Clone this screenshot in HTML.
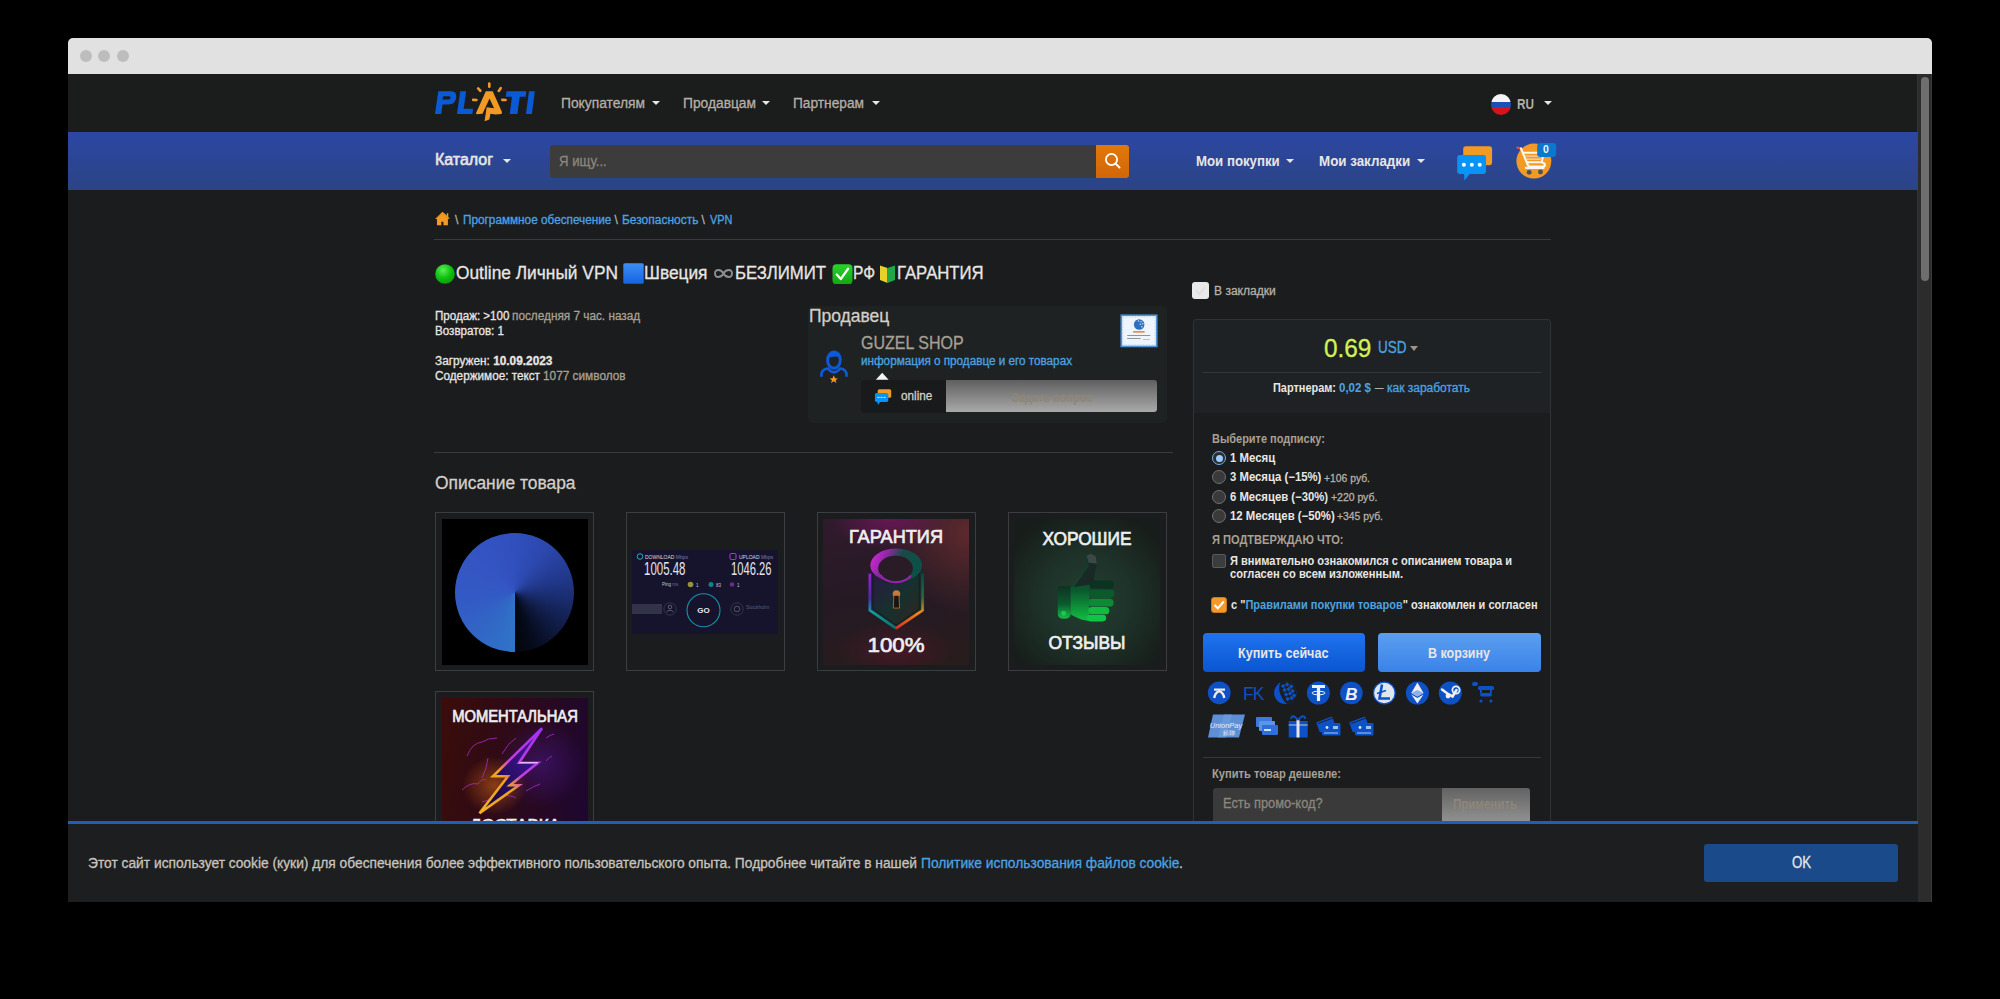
<!DOCTYPE html>
<html><head><meta charset="utf-8"><style>
html,body{margin:0;padding:0;background:#000;}
body{width:2000px;height:999px;overflow:hidden;position:relative;font-family:"Liberation Sans", sans-serif;}
.a{position:absolute;}
.t{position:absolute;white-space:nowrap;transform-origin:0 0;-webkit-text-stroke:0.3px currentColor;}
</style></head><body>
<div class="a" style="left:68px;top:38px;width:1864px;height:864px;background:#1b1c1d;border-radius:5px 5px 0 0;overflow:hidden"></div>
<div class="a" style="left:68px;top:38px;width:1864px;height:36px;background:#e1e1e1;border-radius:5px 5px 0 0"></div>
<div class="a" style="left:79.5px;top:50px;width:12px;height:12px;background:#bdbdbd;border-radius:50%"></div>
<div class="a" style="left:97.5px;top:50px;width:12px;height:12px;background:#bdbdbd;border-radius:50%"></div>
<div class="a" style="left:117px;top:50px;width:12px;height:12px;background:#bdbdbd;border-radius:50%"></div>
<div class="a" style="left:68px;top:74px;width:1850px;height:58px;background:#1b1c1c"></div>
<div class="a" style="left:1917px;top:74px;width:15px;height:828px;background:#2c2c2c;border-left:1px solid #333;border-right:1px solid #3a3a3a;box-sizing:border-box"></div>
<div class="a" style="left:1921px;top:77px;width:8px;height:204px;background:#6e6e6e;border-radius:4px"></div>
<div class="a" style="left:68px;top:132px;width:1850px;height:58px;background:linear-gradient(#2c47a4,#2b4484)"></div>
<svg class="a" style="left:430px;top:78px;" width="110" height="48" viewBox="0 0 2000 873"><path fill="#0a5ad6" fill-rule="evenodd" d="M90 655 L150 240 L385 240 Q485 242 478 350 Q468 478 330 482 L228 482 L203 655 Z M242 330 L222 392 L340 392 Q372 390 374 360 Q376 330 345 330 Z"/><path fill="#0a5ad6" d="M490 655 L550 240 L657 240 L612 560 L782 560 L770 655 Z"/><path fill="#0a5ad6" d="M1392 240 L1752 240 L1738 340 L1630 340 L1590 655 L1450 655 L1490 340 L1378 340 Z"/><path fill="#0a5ad6" d="M1800 240 L1907 240 L1852 655 L1745 655 Z"/><path fill="#f39a24" d="M835 640 L1015 240 L1085 240 L1085 368 L955 652 L850 660 Z M1080 368 L1080 240 L1140 240 L1310 622 L1300 655 L1190 662 L1100 648 L1078 755 L992 785 L1030 530 L1165 548 Z"/><g stroke="#f39a24" stroke-width="48" stroke-linecap="round"><line x1="1078" y1="100" x2="1078" y2="160"/><line x1="875" y1="190" x2="915" y2="232"/><line x1="1285" y1="185" x2="1250" y2="235"/><line x1="785" y1="397" x2="845" y2="400"/><line x1="1315" y1="397" x2="1375" y2="400"/></g></svg>
<div class="t" id="t0" style="left:561px;top:96.15px;font-size:14px;line-height:14px;color:#b5afa6;transform:scaleX(0.9864);">Покупателям</div>
<div class="a" style="left:652px;top:101px;width:0;height:0;border-left:4.0px solid transparent;border-right:4.0px solid transparent;border-top:4.5px solid #e8e6e3"></div>
<div class="t" id="t1" style="left:682.5px;top:96.15px;font-size:14px;line-height:14px;color:#b5afa6;transform:scaleX(0.9844);">Продавцам</div>
<div class="a" style="left:762px;top:101px;width:0;height:0;border-left:4.0px solid transparent;border-right:4.0px solid transparent;border-top:4.5px solid #e8e6e3"></div>
<div class="t" id="t2" style="left:793px;top:96.15px;font-size:14px;line-height:14px;color:#b5afa6;transform:scaleX(0.9797);">Партнерам</div>
<div class="a" style="left:872px;top:101px;width:0;height:0;border-left:4.0px solid transparent;border-right:4.0px solid transparent;border-top:4.5px solid #e8e6e3"></div>
<div class="a" style="left:1490.5px;top:93.5px;width:20px;height:21px;border-radius:50%;overflow:hidden;background:linear-gradient(#f4f4f4 0,#f4f4f4 36%,#1a4fb5 36%,#1a4fb5 64%,#d3141d 64%)"></div>
<div class="t" id="t3" style="left:1517px;top:96.90px;font-size:14px;line-height:14px;color:#b5afa6;font-weight:700;-webkit-text-stroke:0;transform:scaleX(0.8402);">RU</div>
<div class="a" style="left:1543.5px;top:101px;width:0;height:0;border-left:4.0px solid transparent;border-right:4.0px solid transparent;border-top:4.5px solid #e8e6e3"></div>
<div class="t" id="t4" style="left:434.5px;top:152.26px;font-size:16px;line-height:16px;color:#e8e6e3;transform:scaleX(0.9970);-webkit-text-stroke:0.6px currentColor;">Каталог</div>
<div class="a" style="left:503px;top:159px;width:0;height:0;border-left:4.0px solid transparent;border-right:4.0px solid transparent;border-top:4.5px solid #e8e6e3"></div>
<div class="a" style="left:549.5px;top:144.5px;width:547px;height:33px;background:#3c3c3c;border-radius:3px 0 0 3px"></div>
<div class="t" id="t5" style="left:559.25px;top:154.40px;font-size:14px;line-height:14px;color:#8d867c;transform:scaleX(0.9406);">Я ищу...</div>
<div class="a" style="left:1096px;top:144.5px;width:33px;height:33px;background:linear-gradient(#e0790a,#d3650a);border-radius:0 3px 3px 0"></div>
<svg class="a" style="left:1103px;top:151px" width="20" height="20" viewBox="0 0 20 20"><circle cx="8.5" cy="8.5" r="5.6" fill="none" stroke="#fff" stroke-width="1.8"/><line x1="12.6" y1="12.6" x2="16.5" y2="16.5" stroke="#fff" stroke-width="2" stroke-linecap="round"/></svg>
<div class="t" id="t6" style="left:1196.25px;top:154.15px;font-size:14px;line-height:14px;color:#e8e6e3;font-weight:700;-webkit-text-stroke:0;transform:scaleX(0.9453);">Мои покупки</div>
<div class="a" style="left:1286px;top:159px;width:0;height:0;border-left:4.0px solid transparent;border-right:4.0px solid transparent;border-top:4.5px solid #e8e6e3"></div>
<div class="t" id="t7" style="left:1318.75px;top:154.15px;font-size:14px;line-height:14px;color:#e8e6e3;font-weight:700;-webkit-text-stroke:0;transform:scaleX(0.9541);">Мои закладки</div>
<div class="a" style="left:1417px;top:159px;width:0;height:0;border-left:4.0px solid transparent;border-right:4.0px solid transparent;border-top:4.5px solid #e8e6e3"></div>
<svg class="a" style="left:1450px;top:138px;" width="110" height="48" viewBox="0 0 2000 873"><rect x="240" y="150" width="525" height="345" rx="45" fill="#f39a24"/><rect x="130" y="310" width="525" height="345" rx="45" fill="#0794f5"/><path d="M255 640 L370 640 L262 772 Z" fill="#0794f5"/><g fill="#fff"><circle cx="252" cy="487" r="36"/><circle cx="397" cy="487" r="36"/><circle cx="540" cy="487" r="36"/></g><circle cx="1525" cy="420" r="318" fill="#f39a24"/><line x1="1225" y1="175" x2="1290" y2="195" stroke="#e74c3c" stroke-width="40" stroke-linecap="round"/><path d="M1290 190 L1420 500 Q1430 520 1460 520 L1690 520 Q1725 520 1725 490 Q1725 455 1690 455" fill="none" stroke="#fbf6ee" stroke-width="40" stroke-linecap="round"/><path d="M1330 268 L1700 268 L1670 440 L1400 440" fill="none" stroke="#fbf6ee" stroke-width="38"/><line x1="1380" y1="545" x2="1700" y2="545" stroke="#fbf6ee" stroke-width="40" stroke-linecap="round"/><line x1="1370" y1="330" x2="1680" y2="330" stroke="#f7c890" stroke-width="30"/><line x1="1390" y1="385" x2="1670" y2="385" stroke="#f7c890" stroke-width="30"/><circle cx="1440" cy="625" r="45" fill="#4a5060"/><circle cx="1645" cy="620" r="45" fill="#4a5060"/><rect x="1585" y="90" width="345" height="255" rx="60" fill="#0a78d0"/><text x="1745" y="280" font-family="Liberation Sans" font-size="190" font-weight="700" fill="#f2f2f2" text-anchor="middle">0</text></svg>
<svg class="a" style="left:430px;top:206px;" width="40" height="24" viewBox="0 0 1665 999"><path fill="#f39a24" d="M520 240 L215 540 L290 540 L290 800 L470 800 L470 660 L560 660 L560 800 L745 800 L745 540 L825 520 L760 455 L760 300 L700 300 L700 400 Z"/><path d="M240 520 L520 330 L800 520" fill="none" stroke="#b97018" stroke-width="22" opacity="0.6"/></svg>
<div class="t" id="t8" style="left:455px;top:213.64px;font-size:12px;line-height:12px;color:#b5afa6;">\</div>
<div class="t" id="t9" style="left:463px;top:213.64px;font-size:12px;line-height:12px;color:#4ba3e3;transform:scaleX(0.9809);">Программное обеспечение</div>
<div class="t" id="t10" style="left:614.5px;top:213.64px;font-size:12px;line-height:12px;color:#b5afa6;">\</div>
<div class="t" id="t11" style="left:622px;top:213.64px;font-size:12px;line-height:12px;color:#4ba3e3;transform:scaleX(0.9981);">Безопасность</div>
<div class="t" id="t12" style="left:701.5px;top:213.64px;font-size:12px;line-height:12px;color:#b5afa6;">\</div>
<div class="t" id="t13" style="left:710px;top:213.64px;font-size:12px;line-height:12px;color:#4ba3e3;transform:scaleX(0.9073);">VPN</div>
<div class="a" style="left:434px;top:239px;width:1117px;height:1px;background:#393c3e"></div>
<div class="t" id="t14" style="left:455.5px;top:264.14px;font-size:18.5px;line-height:18.5px;color:#e8e6e3;transform:scaleX(0.9369);">Outline Личный VPN</div>
<div class="t" id="t15" style="left:644px;top:264.14px;font-size:18.5px;line-height:18.5px;color:#e8e6e3;transform:scaleX(0.9364);">Швеция</div>
<div class="t" id="t16" style="left:735px;top:264.14px;font-size:18.5px;line-height:18.5px;color:#e8e6e3;transform:scaleX(0.9055);">БЕЗЛИМИТ</div>
<div class="t" id="t17" style="left:853px;top:264.14px;font-size:18.5px;line-height:18.5px;color:#e8e6e3;transform:scaleX(0.8396);">РФ</div>
<div class="t" id="t18" style="left:896.5px;top:264.14px;font-size:18.5px;line-height:18.5px;color:#e8e6e3;transform:scaleX(0.9042);">ГАРАНТИЯ</div>
<svg class="a" style="left:435px;top:263.5px;" width="20" height="20" viewBox="0 0 20 20"><defs><radialGradient id="gc" cx="0.4" cy="0.3" r="0.75"><stop offset="0" stop-color="#5af05a"/><stop offset="0.55" stop-color="#10c010"/><stop offset="1" stop-color="#0a9a0a"/></radialGradient></defs><circle cx="10" cy="10" r="9.8" fill="url(#gc)"/></svg><svg class="a" style="left:623px;top:263px;" width="21" height="21" viewBox="0 0 21 21"><defs><linearGradient id="bs" x1="0" y1="0" x2="0" y2="1"><stop offset="0" stop-color="#3d8ef5"/><stop offset="1" stop-color="#1463e0"/></linearGradient></defs><rect x="0.3" y="0.3" width="20.4" height="20.4" rx="1.5" fill="url(#bs)"/></svg><svg class="a" style="left:713px;top:267px;" width="21" height="13" viewBox="0 0 21 13"><path d="M10.5 6.5 C8 2 2 1.5 2 6.5 C2 11.5 8 11 10.5 6.5 C13 2 19 1.5 19 6.5 C19 11.5 13 11 10.5 6.5 Z" fill="none" stroke="#8e8e8e" stroke-width="1.9"/></svg><svg class="a" style="left:831.5px;top:263.5px;" width="21" height="20.5" viewBox="0 0 21 20.5"><defs><linearGradient id="gk" x1="0" y1="0" x2="0" y2="1"><stop offset="0" stop-color="#2ed12e"/><stop offset="1" stop-color="#10a810"/></linearGradient></defs><rect x="0.5" y="0.3" width="20" height="20" rx="4" fill="url(#gk)"/><path d="M4.8 10.5 L8.8 15 L16 4.8" fill="none" stroke="#fff" stroke-width="2.3" stroke-linecap="round" stroke-linejoin="round"/></svg><svg class="a" style="left:878.5px;top:263.5px;" width="17" height="19.5" viewBox="0 0 17 19.5"><path d="M1 1.5 L8.5 4 L8.5 19 L1 16 Z" fill="#e8cf2a"/><path d="M16 1.5 L8.5 4 L8.5 19 L16 16 Z" fill="#1fa845"/></svg>
<div class="t" id="t19" style="left:434.6px;top:309.84px;font-size:12px;line-height:12px;color:#e8e6e3;transform:scaleX(0.9649);">Продаж: >100</div>
<div class="t" id="t20" style="left:512.4px;top:309.84px;font-size:12px;line-height:12px;color:#a8a095;transform:scaleX(0.9824);">последняя 7 час. назад</div>
<div class="t" id="t21" style="left:434.6px;top:325.44px;font-size:12px;line-height:12px;color:#e8e6e3;transform:scaleX(0.9682);">Возвратов: 1</div>
<div class="t" id="t22" style="left:434.6px;top:355.44px;font-size:12px;line-height:12px;color:#e8e6e3;transform:scaleX(0.9863);">Загружен: <b>10.09.2023</b></div>
<div class="t" id="t23" style="left:434.6px;top:369.84px;font-size:12px;line-height:12px;color:#e8e6e3;transform:scaleX(0.9782);">Содержимое: текст</div>
<div class="t" id="t24" style="left:543.4px;top:369.84px;font-size:12px;line-height:12px;color:#a8a095;transform:scaleX(0.9853);">1077 символов</div>
<div class="a" style="left:808px;top:306px;width:358.5px;height:116.5px;background:#1f2223;border-radius:5px"></div>
<div class="t" id="t25" style="left:809px;top:306.84px;font-size:18.5px;line-height:18.5px;color:#d3cfc9;transform:scaleX(0.9440);">Продавец</div>
<div class="t" id="t26" style="left:860.8px;top:334.89px;font-size:17.5px;line-height:17.5px;color:#a8a095;transform:scaleX(0.9148);">GUZEL SHOP</div>
<div class="t" id="t27" style="left:860.8px;top:354.84px;font-size:12px;line-height:12px;color:#4ba3e3;transform:scaleX(0.9750);">информация о продавце и его товарах</div>
<div class="a" style="left:860.5px;top:379.5px;width:85px;height:33.5px;background:#181a1b;border-radius:4px 0 0 4px"></div>
<div class="t" id="t28" style="left:900.7px;top:389.84px;font-size:12px;line-height:12px;color:#d3cfc9;transform:scaleX(0.9772);">online</div>
<div class="a" style="left:946px;top:380px;width:210.5px;height:32px;background:linear-gradient(#5f5f5f,#a9a9a9);border-radius:0 3px 3px 0"></div>
<div class="t" id="t29" style="left:1011.5px;top:391.64px;font-size:12px;line-height:12px;color:#8f8577;font-weight:700;-webkit-text-stroke:0;transform:scaleX(0.9143);">Задать вопрос</div>
<svg class="a" style="left:812px;top:340px;" width="88" height="75" viewBox="0 0 1172 999"><ellipse cx="292" cy="268" rx="85" ry="108" fill="none" stroke="#0d5ad8" stroke-width="38"/><path d="M205 240 Q220 150 300 150 Q385 150 385 240 Q330 200 205 240 Z" fill="#0d5ad8"/><path d="M125 490 L125 460 Q130 390 210 380 Q250 430 292 430 Q335 430 375 380 Q455 390 460 460 L460 490" fill="none" stroke="#0d5ad8" stroke-width="36"/><path fill="#f39a24" d="M290 470 L307 510 L345 512 L315 535 L327 572 L290 550 L253 572 L265 535 L235 512 L273 510 Z"/><path fill="#f4f4f4" d="M850 530 L1020 530 L935 435 Z"/><rect x="875" y="655" width="180" height="115" rx="22" fill="#f39a24"/><rect x="838" y="705" width="178" height="120" rx="22" fill="#0794f5"/><path d="M865 815 L915 815 L880 865 Z" fill="#0794f5"/><g stroke="#cfe8ff" stroke-width="14"><line x1="870" y1="765" x2="900" y2="765"/><line x1="912" y1="765" x2="940" y2="765"/><line x1="952" y1="765" x2="980" y2="765"/></g></svg>
<svg class="a" style="left:1115px;top:310px;" width="50" height="42" viewBox="0 0 1189 999"><rect x="150" y="125" width="842" height="742" fill="#eef5fc" stroke="#4d93d8" stroke-width="40"/><rect x="190" y="165" width="762" height="662" fill="none" stroke="#b7d3ef" stroke-width="22" stroke-dasharray="30 40"/><circle cx="575" cy="345" r="125" fill="#2a72c0"/><g fill="#cfe0f3"><circle cx="560" cy="260" r="18"/><circle cx="620" cy="280" r="18"/><circle cx="600" cy="340" r="18"/><circle cx="660" cy="330" r="18"/><circle cx="640" cy="400" r="18"/></g><rect x="430" y="500" width="275" height="40" fill="#e88a4a"/><rect x="290" y="595" width="550" height="22" fill="#8a8a8a"/><rect x="290" y="665" width="320" height="22" fill="#8a8a8a"/><rect x="665" y="690" width="160" height="14" fill="#9a9a9a"/></svg>
<div class="a" style="left:434px;top:452px;width:739px;height:1px;background:#393c3e"></div>
<div class="t" id="t30" style="left:434.9px;top:473.56px;font-size:18px;line-height:18px;color:#d3cfc9;transform:scaleX(0.9672);">Описание товара</div>
<div class="a" style="left:435px;top:511.5px;width:159px;height:159px;border:1px solid #3b3e40;box-sizing:border-box"></div>
<div class="a" style="left:625.5px;top:511.5px;width:159px;height:159px;border:1px solid #3b3e40;box-sizing:border-box"></div>
<div class="a" style="left:816.5px;top:511.5px;width:159px;height:159px;border:1px solid #3b3e40;box-sizing:border-box"></div>
<div class="a" style="left:1008px;top:511.5px;width:159px;height:159px;border:1px solid #3b3e40;box-sizing:border-box"></div>
<div class="a" style="left:435px;top:690.5px;width:159px;height:159px;border:1px solid #3b3e40;box-sizing:border-box"></div>
<div class="a" style="left:442px;top:519px;width:145.5px;height:146px;background:#000"></div><div class="a" style="left:455.2px;top:533.2px;width:118.6px;height:119px;border-radius:50%;background:conic-gradient(from 0deg,#3150bd 0deg,#2c48ae 35deg,#1f3584 80deg,#12204f 120deg,#070d22 155deg,#020509 179.5deg,#2f74c7 180deg,#3168c6 215deg,#335ac4 260deg,#3454c3 320deg,#3150bd 360deg)"></div>
<svg class="a" style="left:632px;top:549.5px;" width="146" height="84.5" viewBox="0 0 146 84.5"><rect width="146" height="84.5" fill="#15142c"/><circle cx="8" cy="6.5" r="2.8" fill="none" stroke="#1ab5b5" stroke-width="1"/><text x="13" y="8.5" font-family="Liberation Sans" font-size="5" fill="#d8d8e8">DOWNLOAD <tspan fill="#7a7aa0">Mbps</tspan></text><rect x="98" y="3.5" width="6" height="6" rx="1.2" fill="none" stroke="#b03ad0" stroke-width="1"/><text x="107" y="8.5" font-family="Liberation Sans" font-size="5" fill="#d8d8e8">UPLOAD <tspan fill="#7a7aa0">Mbps</tspan></text><text x="12" y="25" font-family="Liberation Sans" font-size="18" fill="#e4e4ee" textLength="41.5" lengthAdjust="spacingAndGlyphs">1005.48</text><text x="99" y="25" font-family="Liberation Sans" font-size="18" fill="#e4e4ee" textLength="40.5" lengthAdjust="spacingAndGlyphs">1046.26</text><text x="30" y="36" font-family="Liberation Sans" font-size="4.5" fill="#c8c8d8">Ping <tspan fill="#6a6a90">ms</tspan></text><circle cx="58.5" cy="34.5" r="2.8" fill="#9a9040"/><circle cx="79" cy="34.5" r="2.5" fill="#15808a"/><circle cx="100" cy="34.5" r="2.3" fill="#6a2a8a"/><text x="64" y="36.5" font-family="Liberation Sans" font-size="4.5" fill="#c8c8d8">1</text><text x="84" y="36.5" font-family="Liberation Sans" font-size="4.5" fill="#c8c8d8">83</text><text x="105" y="36.5" font-family="Liberation Sans" font-size="4.5" fill="#c8c8d8">1</text><rect x="0" y="54" width="30" height="10" fill="#4a4a60" opacity="0.55"/><circle cx="38" cy="59" r="6.2" fill="none" stroke="#3a3a55" stroke-width="0.8"/><circle cx="38" cy="57" r="1.8" fill="none" stroke="#8a8aa0" stroke-width="0.6"/><path d="M34.5 62 Q38 58.5 41.5 62" fill="none" stroke="#8a8aa0" stroke-width="0.6"/><circle cx="71.5" cy="60.2" r="16.5" fill="none" stroke="#1a8ea8" stroke-width="1.1"/><text x="71.5" y="63" font-family="Liberation Sans" font-size="8" font-weight="700" fill="#e8e8f0" text-anchor="middle">GO</text><circle cx="105" cy="59" r="6.2" fill="none" stroke="#3a3a55" stroke-width="0.8"/><circle cx="105" cy="59" r="2.8" fill="none" stroke="#7a7a95" stroke-width="0.6"/><text x="114" y="58.5" font-family="Liberation Sans" font-size="5" fill="#5a5a80">Stockholm</text></svg>
<div class="a" style="left:823px;top:519px;width:146px;height:146px;overflow:hidden;background:radial-gradient(ellipse 40% 22% at 45% 0%,rgba(150,20,120,0.55),rgba(0,0,0,0) 100%),radial-gradient(ellipse 55% 55% at 100% 10%,rgba(105,45,45,0.8),rgba(0,0,0,0) 100%),radial-gradient(ellipse 40% 20% at 50% 90%,rgba(110,20,45,0.4),rgba(0,0,0,0) 100%),linear-gradient(170deg,#301a2c 0%,#251a24 50%,#281c1c 100%)"></div><svg class="a" style="left:823px;top:519px;" width="146" height="146" viewBox="0 0 146 146"><text x="73" y="24" font-family="Liberation Sans" font-size="19" fill="#eeeeee" stroke="#eeeeee" stroke-width="0.7" text-anchor="middle" textLength="94" lengthAdjust="spacingAndGlyphs">ГАРАНТИЯ</text><text x="73" y="133" font-family="Liberation Sans" font-size="21" fill="#eeeeee" stroke="#eeeeee" stroke-width="0.7" text-anchor="middle" textLength="57" lengthAdjust="spacingAndGlyphs">100%</text></svg><svg class="a" style="left:855px;top:545px;" width="80" height="90" viewBox="0 0 888 999"><defs><linearGradient id="rimL" x1="0" y1="0" x2="0" y2="1"><stop offset="0" stop-color="#9a20d0"/><stop offset="0.45" stop-color="#4a2aa0"/><stop offset="0.7" stop-color="#10a0a0"/><stop offset="1" stop-color="#106a6a"/></linearGradient><linearGradient id="rimR" x1="0" y1="0" x2="0" y2="1"><stop offset="0" stop-color="#0a4a40"/><stop offset="0.45" stop-color="#2a6a40"/><stop offset="0.72" stop-color="#f08a18"/><stop offset="1" stop-color="#e02a20"/></linearGradient><linearGradient id="body" x1="0" y1="0" x2="1" y2="1"><stop offset="0" stop-color="#2e1646"/><stop offset="0.5" stop-color="#17302e"/><stop offset="1" stop-color="#33241e"/></linearGradient><linearGradient id="shk" x1="0" y1="0" x2="1" y2="0.3"><stop offset="0" stop-color="#f020f0"/><stop offset="0.35" stop-color="#8a2aa0"/><stop offset="0.6" stop-color="#1a4a48"/><stop offset="1" stop-color="#0c5048"/></linearGradient></defs><path d="M145 330 Q145 290 185 290 L730 290 Q770 290 770 330 L770 730 L455 950 L145 730 Z" fill="url(#body)"/><path d="M200 320 L715 320 L715 710 L455 890 L200 710 Z" fill="none" stroke="#0e1a1a" stroke-width="14" opacity="0.6"/><path d="M165 320 L165 725 L455 925" fill="none" stroke="url(#rimL)" stroke-width="30"/><path d="M750 320 L750 725 L455 925" fill="none" stroke="url(#rimR)" stroke-width="30"/><path fill-rule="evenodd" fill="url(#shk)" d="M170 225 A287 185 0 0 1 745 225 A287 185 0 0 1 170 225 Z M260 260 A190 140 0 0 0 640 260 A190 140 0 0 0 260 260 Z"/><ellipse cx="450" cy="260" rx="190" ry="140" fill="#2a1c26"/><path d="M280 330 A190 140 0 0 0 620 340" fill="none" stroke="#9a20b0" stroke-width="22"/><circle cx="460" cy="545" r="42" fill="#c87a38"/><path d="M432 560 L488 560 L495 700 L425 700 Z" fill="#1a1410" stroke="#b06a28" stroke-width="10"/></svg>
<div class="a" style="left:1014px;top:519px;width:146px;height:146px;background:radial-gradient(circle at 50% 55%,#243e32 0%,#1e3329 40%,#171d1a 85%)"></div><svg class="a" style="left:1014px;top:519px;" width="146" height="146" viewBox="0 0 146 146"><text x="73" y="26" font-family="Liberation Sans" font-size="19" fill="#eeeeee" stroke="#eeeeee" stroke-width="0.7" text-anchor="middle" textLength="89" lengthAdjust="spacingAndGlyphs">ХОРОШИЕ</text><text x="73" y="130" font-family="Liberation Sans" font-size="18" fill="#eeeeee" stroke="#eeeeee" stroke-width="0.7" text-anchor="middle" textLength="77" lengthAdjust="spacingAndGlyphs">ОТЗЫВЫ</text></svg><svg class="a" style="left:1050px;top:548px;" width="70" height="78" viewBox="0 0 897 999"><defs><linearGradient id="th" x1="0" y1="0" x2="0" y2="1"><stop offset="0" stop-color="#0c3322"/><stop offset="0.55" stop-color="#0b5a2e"/><stop offset="1" stop-color="#10c044"/></linearGradient></defs><path d="M100 490 L265 490 L265 845 Q265 905 180 905 Q100 905 100 845 Z" fill="url(#th)"/><circle cx="175" cy="835" r="32" fill="#30e060" opacity="0.6"/><path d="M265 510 L290 490 L360 400 L440 290 L470 230 L470 100 L520 75 L580 110 L600 190 L590 300 L560 420 L510 430 L500 935 L400 915 L300 870 L265 850 Z" fill="url(#th)"/><path d="M495 240 L495 110 L520 80 L580 110 L600 190 L560 420 L505 470 L300 500 L330 465 Z" fill="#1a2826"/><path d="M470 100 L520 72 L585 105 L600 200 L495 190 Z" fill="#3a4846"/><rect x="510" y="415" width="310" height="105" rx="50" fill="#0a3322"/><rect x="500" y="535" width="325" height="105" rx="50" fill="#0b5a2c"/><rect x="495" y="650" width="320" height="100" rx="50" fill="#0d8a34"/><rect x="490" y="755" width="270" height="95" rx="47" fill="#10bb40"/><rect x="475" y="855" width="245" height="85" rx="42" fill="#10c444"/></svg>
<div class="a" style="left:442px;top:698px;width:145.5px;height:146px;background:radial-gradient(ellipse 22% 20% at 36% 60%,rgba(230,110,20,0.5),rgba(0,0,0,0) 100%),radial-gradient(ellipse 30% 30% at 68% 45%,rgba(90,30,200,0.35),rgba(0,0,0,0) 100%),linear-gradient(100deg,#3a0d08 0%,#2c0a1a 50%,#1c0632 100%)"></div><svg class="a" style="left:442px;top:698px;" width="146" height="146" viewBox="0 0 146 146"><defs><linearGradient id="lt" x1="1" y1="0" x2="0" y2="1"><stop offset="0" stop-color="#a030f0"/><stop offset="0.45" stop-color="#c040e0"/><stop offset="0.6" stop-color="#f0a020"/><stop offset="1" stop-color="#f0b020"/></linearGradient><linearGradient id="ltf" x1="1" y1="0" x2="0" y2="1"><stop offset="0" stop-color="#4a18b0"/><stop offset="1" stop-color="#10062a"/></linearGradient></defs><g stroke="#b030d0" stroke-width="1" fill="none" opacity="0.75"><path d="M25 58 Q30 45 40 44 Q46 40 55 40"/><path d="M40 80 Q45 70 46 60"/><path d="M60 56 Q66 45 74 40"/><path d="M104 40 Q108 37 112 36"/><path d="M104 63 Q106 60 110 58"/><path d="M20 92 Q28 84 36 86 Q40 80 44 82"/><path d="M84 93 Q92 88 98 86"/><path d="M40 104 Q52 100 60 98 Q70 97 74 100"/></g><path d="M100 30.2 L51 78.2 L66 78.2 L37.5 115.2 L77 87.2 L68 87.2 L96 64.7 L77 64.7 Z" fill="url(#ltf)" stroke="url(#lt)" stroke-width="2.6" stroke-linejoin="miter"/><line x1="77" y1="64.7" x2="96" y2="64.7" stroke="#f0c0ff" stroke-width="1.2"/><text x="73" y="23.5" font-family="Liberation Sans" font-size="16" fill="#eeeeee" stroke="#eeeeee" stroke-width="0.7" text-anchor="middle" textLength="125.7" lengthAdjust="spacingAndGlyphs">МОМЕНТАЛЬНАЯ</text><text x="73" y="133" font-family="Liberation Sans" font-size="16" fill="#eeeeee" stroke="#eeeeee" stroke-width="0.7" text-anchor="middle" textLength="90" lengthAdjust="spacingAndGlyphs">ДОСТАВКА</text></svg>
<div class="a" style="left:1192px;top:282.4px;width:17px;height:17px;background:#e9e9e9;border-radius:3px"></div>
<svg class="a" style="left:1192px;top:282.4px" width="17" height="17" viewBox="0 0 17 17"><path d="M4 8.5 L7.5 12 L13 5" fill="none" stroke="#dcdcdc" stroke-width="1.5"/></svg>
<div class="t" id="t31" style="left:1214.2px;top:284.84px;font-size:12px;line-height:12px;color:#b5afa6;transform:scaleX(1.0044);">В закладки</div>
<div class="a" style="left:1192.5px;top:318.5px;width:358.5px;height:520px;border:1px solid #2f3335;border-bottom:none;border-radius:4px 4px 0 0;background:#1b1c1d;box-sizing:border-box"></div>
<div class="a" style="left:1193.5px;top:319.5px;width:356.5px;height:93px;background:#1f2224;border-radius:3px 3px 0 0"></div>
<div class="t" id="t32" style="left:1323.8px;top:334.69px;font-size:26px;line-height:26px;color:#d2f255;transform:scaleX(0.9366);">0.69</div>
<div class="t" id="t33" style="left:1377.8px;top:339.78px;font-size:16.8px;line-height:16.8px;color:#4ba3e3;transform:scaleX(0.8042);">USD</div>
<div class="a" style="left:1410px;top:346.2px;width:0;height:0;border-left:4.5px solid transparent;border-right:4.5px solid transparent;border-top:5px solid #9d9486"></div>
<div class="a" style="left:1203px;top:372px;width:338px;height:1px;background:#34383a"></div>
<div class="t" id="t34" style="left:1273.4px;top:382.44px;font-size:12px;line-height:12px;color:#e8e6e3;font-weight:700;-webkit-text-stroke:0;transform:scaleX(0.9110);">Партнерам:</div>
<div class="t" id="t35" style="left:1339px;top:382.44px;font-size:12px;line-height:12px;color:#4ba3e3;font-weight:700;-webkit-text-stroke:0;transform:scaleX(0.9588);">0,02 $</div>
<div class="t" id="t36" style="left:1374.8px;top:382.44px;font-size:12px;line-height:12px;color:#b5afa6;transform:scaleX(0.7000);">—</div>
<div class="t" id="t37" style="left:1386.8px;top:382.44px;font-size:12px;line-height:12px;color:#4ba3e3;transform:scaleX(0.9987);">как заработать</div>
<div class="t" id="t38" style="left:1212px;top:432.84px;font-size:12px;line-height:12px;color:#a8a095;font-weight:700;-webkit-text-stroke:0;transform:scaleX(0.9137);">Выберите подписку:</div>
<div class="a" style="left:1212.3px;top:451.2px;width:14px;height:14px;border:1.8px solid #78aee8;border-radius:50%;box-sizing:border-box;background:#2a2c2e"></div>
<div class="a" style="left:1215.8px;top:454.7px;width:7px;height:7px;background:#99ccff;border-radius:50%"></div>
<div class="t" id="t39" style="left:1229.6px;top:452.24px;font-size:12px;line-height:12px;color:#e8e6e3;font-weight:700;-webkit-text-stroke:0;transform:scaleX(0.9500);">1 Месяц</div>
<div class="a" style="left:1212.3px;top:470.34999999999997px;width:14px;height:14px;border:1.2px solid #707070;border-radius:50%;box-sizing:border-box;background:#3a3a3a"></div>
<div class="t" id="t40" style="left:1229.6px;top:471.39px;font-size:12px;line-height:12px;color:#e8e6e3;font-weight:700;-webkit-text-stroke:0;transform:scaleX(0.9447);">3 Месяца (−15%)</div>
<div class="t" id="t41" style="left:1324px;top:472.66px;font-size:10.5px;line-height:10.5px;color:#b5afa6;transform:scaleX(0.9873);">+106 руб.</div>
<div class="a" style="left:1212.3px;top:489.5px;width:14px;height:14px;border:1.2px solid #707070;border-radius:50%;box-sizing:border-box;background:#3a3a3a"></div>
<div class="t" id="t42" style="left:1229.6px;top:490.54px;font-size:12px;line-height:12px;color:#e8e6e3;font-weight:700;-webkit-text-stroke:0;transform:scaleX(0.9434);">6 Месяцев (−30%)</div>
<div class="t" id="t43" style="left:1330.5px;top:491.81px;font-size:10.5px;line-height:10.5px;color:#b5afa6;transform:scaleX(0.9937);">+220 руб.</div>
<div class="a" style="left:1212.3px;top:508.65px;width:14px;height:14px;border:1.2px solid #707070;border-radius:50%;box-sizing:border-box;background:#3a3a3a"></div>
<div class="t" id="t44" style="left:1229.6px;top:509.69px;font-size:12px;line-height:12px;color:#e8e6e3;font-weight:700;-webkit-text-stroke:0;transform:scaleX(0.9462);">12 Месяцев (−50%)</div>
<div class="t" id="t45" style="left:1337px;top:510.96px;font-size:10.5px;line-height:10.5px;color:#b5afa6;transform:scaleX(0.9873);">+345 руб.</div>
<div class="t" id="t46" style="left:1212px;top:534.24px;font-size:12px;line-height:12px;color:#a8a095;font-weight:700;-webkit-text-stroke:0;transform:scaleX(0.9214);">Я ПОДТВЕРЖДАЮ ЧТО:</div>
<div class="a" style="left:1212px;top:554.3px;width:14px;height:14px;background:#3a3c3e;border:1px solid #5a5a5a;border-radius:2px;box-sizing:border-box"></div>
<div class="t" id="t47" style="left:1229.6px;top:554.64px;font-size:12px;line-height:12px;color:#e8e6e3;font-weight:700;-webkit-text-stroke:0;transform:scaleX(0.9213);">Я внимательно ознакомился с описанием товара и</div>
<div class="t" id="t48" style="left:1229.6px;top:568.34px;font-size:12px;line-height:12px;color:#e8e6e3;font-weight:700;-webkit-text-stroke:0;transform:scaleX(0.9274);">согласен со всем изложенным.</div>
<div class="a" style="left:1211px;top:597px;width:16px;height:16px;background:#f39a2a;border:1px solid #c77a20;border-radius:3px;box-sizing:border-box"></div>
<svg class="a" style="left:1211px;top:597px" width="16" height="16" viewBox="0 0 16 16"><path d="M3.5 8 L6.8 11.3 L12.8 4.5" fill="none" stroke="#fff" stroke-width="2"/></svg>
<div class="t" id="t49" style="left:1231.4px;top:598.84px;font-size:12px;line-height:12px;color:#e8e6e3;font-weight:700;-webkit-text-stroke:0;transform:scaleX(0.9174);">с "<span style="color:#4ba3e3">Правилами покупки товаров</span>" ознакомлен и согласен</div>
<div class="a" style="left:1203px;top:633px;width:162px;height:38.5px;background:linear-gradient(#2073ee,#0a55d2);border-radius:4px"></div>
<div class="t" id="t50" style="left:1238.3px;top:645.55px;font-size:14px;line-height:14px;color:#e8e6e3;font-weight:700;-webkit-text-stroke:0;transform:scaleX(0.8984);">Купить сейчас</div>
<div class="a" style="left:1378px;top:633px;width:162.5px;height:38.5px;background:linear-gradient(#5b9ff0,#3a82e8);border-radius:4px"></div>
<div class="t" id="t51" style="left:1428px;top:645.55px;font-size:14px;line-height:14px;color:#e8e6e3;font-weight:700;-webkit-text-stroke:0;transform:scaleX(0.8913);">В корзину</div>
<svg class="a" style="left:1200px;top:675px;" width="360" height="70" viewBox="0 0 360 70"><circle cx="19.25" cy="17.8" r="11.4" fill="#0c51c6"/><rect x="14" y="13.5" width="11" height="2.2" fill="#ececec"/><path d="M14.2 23 Q15.2 17.5 19.25 16.2 Q23.3 17.5 24.3 23" fill="none" stroke="#ececec" stroke-width="2.4"/><text x="43" y="24.5" font-family="Liberation Sans" font-size="17.5" fill="#0c51c6" letter-spacing="-1">FK</text><defs><clipPath id="wmc"><circle cx="85.3" cy="17.8" r="11.2"/></clipPath></defs><circle cx="85.3" cy="17.8" r="11.2" fill="#0c51c6"/><g clip-path="url(#wmc)"><path d="M81 6 Q78 12 80 18 Q82 25 88 30 L100 30 L100 6 Z" fill="#1b1d1e"/><rect x="81.5" y="9.5" width="3.2" height="3.2" fill="#0c51c6" transform="rotate(45 83.1 11.1)"/><rect x="85.5" y="8" width="3.2" height="3.2" fill="#0c51c6" transform="rotate(45 87.1 9.6)"/><rect x="89.5" y="10" width="3.2" height="3.2" fill="#0c51c6" transform="rotate(45 91.1 11.6)"/><rect x="83" y="13.5" width="3.2" height="3.2" fill="#0c51c6" transform="rotate(45 84.6 15.1)"/><rect x="87" y="12.5" width="3.2" height="3.2" fill="#0c51c6" transform="rotate(45 88.6 14.1)"/><rect x="91" y="14.5" width="3.2" height="3.2" fill="#0c51c6" transform="rotate(45 92.6 16.1)"/><rect x="84.5" y="18" width="3.2" height="3.2" fill="#0c51c6" transform="rotate(45 86.1 19.6)"/><rect x="88.5" y="17" width="3.2" height="3.2" fill="#0c51c6" transform="rotate(45 90.1 18.6)"/><rect x="92.5" y="19" width="3.2" height="3.2" fill="#0c51c6" transform="rotate(45 94.1 20.6)"/><rect x="86" y="22.5" width="3.2" height="3.2" fill="#0c51c6" transform="rotate(45 87.6 24.1)"/><rect x="90" y="21.5" width="3.2" height="3.2" fill="#0c51c6" transform="rotate(45 91.6 23.1)"/></g><circle cx="118.4" cy="18" r="11.5" fill="#0c51c6"/><path d="M112 11.5 L125 11.5 M118.5 11.5 L118.5 26" stroke="#f0f0f0" stroke-width="3.2"/><ellipse cx="118.5" cy="18" rx="6.5" ry="1.8" fill="none" stroke="#f0f0f0" stroke-width="1"/><circle cx="151.4" cy="18" r="11.3" fill="#0c51c6"/><text x="151.4" y="24.5" font-family="Liberation Sans" font-weight="700" font-style="italic" font-size="17" fill="#f0f0f0" text-anchor="middle">B</text><circle cx="184.3" cy="18" r="10.8" fill="#dfe6ef" stroke="#0c51c6" stroke-width="1.2"/><path d="M182 9.5 L179.5 23.5 L190 23.5" fill="none" stroke="#0c51c6" stroke-width="2.6"/><line x1="177" y1="18.5" x2="186" y2="15.5" stroke="#0c51c6" stroke-width="1.6"/><circle cx="217.4" cy="18" r="11.5" fill="#0c51c6"/><path d="M217.4 7.5 L223.5 18 L217.4 21.5 L211.3 18 Z" fill="#f0f0f0"/><path d="M211.3 19.5 L217.4 23 L223.5 19.5 L217.4 28.5 Z" fill="#e8ecf4"/><path d="M211.3 18 L217.4 15 L223.5 18 L217.4 21.5 Z" fill="#8fb0e6"/><circle cx="250.3" cy="18" r="11.5" fill="#0c51c6"/><path d="M242 14.5 L248 19 L252.5 21.5 L256.5 15" fill="none" stroke="#f0f0f0" stroke-width="2.6" stroke-linecap="round"/><circle cx="256" cy="15" r="3.6" fill="none" stroke="#f0f0f0" stroke-width="1.8"/><circle cx="248" cy="21" r="2.4" fill="#f0f0f0"/><g fill="#0c51c6"><rect x="272" y="7" width="6" height="4" rx="2"/><rect x="278" y="11" width="16" height="4" rx="1.5"/><rect x="280" y="18" width="12" height="3.5" rx="1.7"/><circle cx="281" cy="26" r="1.6"/><circle cx="291" cy="26" r="1.6"/><rect x="280" y="15" width="1.8" height="3"/><rect x="290" y="15" width="1.8" height="3"/></g><path d="M13 39.6 L45 39.6 L39 62.6 L8 62.6 Z" fill="#5e8fd6"/><path d="M24 39.6 L32 39.6 L26 62.6 L18 62.6 Z" fill="#6d9cdf" opacity="0.7"/><text x="26" y="53" font-family="Liberation Sans" font-style="italic" font-size="7.5" fill="#e8eef8" text-anchor="middle">UnionPay</text><text x="29" y="59.5" font-family="Liberation Sans" font-size="5.5" fill="#e8eef8" text-anchor="middle">銀聯</text><rect x="56" y="42" width="16" height="10" rx="1" fill="#3b7be0"/><rect x="59" y="46" width="16" height="10" rx="1" fill="#5b95e6"/><rect x="62" y="50" width="16" height="10" rx="1" fill="#2f6fdc"/><rect x="64" y="54" width="7" height="2" fill="#cfe0f6"/><rect x="88.7" y="46" width="19" height="16.5" fill="#0c51c6"/><rect x="96.5" y="44" width="3" height="18.5" fill="#e6e6e6"/><line x1="88.7" y1="50" x2="107.7" y2="50" stroke="#e6e6e6" stroke-width="0.8"/><path d="M98 45 Q92 38 91 44 M98 45 Q104 38 105.5 44" fill="none" stroke="#0c51c6" stroke-width="1.8"/><g transform="translate(0,0)"><rect x="117.5" y="44" width="17" height="11" rx="1" fill="#0c51c6" transform="rotate(-20 126 49.5)"/><line x1="118" y1="48.5" x2="134" y2="42.7" stroke="#1b1d1e" stroke-width="0.9"/><rect x="122" y="48" width="18.5" height="12.5" rx="1" fill="#0c51c6"/><rect x="133" y="51" width="5" height="3" fill="#9cc0f0"/><line x1="124" y1="58" x2="138" y2="58" stroke="#d8e6f8" stroke-width="0.8"/><circle cx="127" cy="52.5" r="1.4" fill="#d8e6f8"/></g><g transform="translate(33,0)"><rect x="117.5" y="44" width="17" height="11" rx="1" fill="#0c51c6" transform="rotate(-20 126 49.5)"/><line x1="118" y1="48.5" x2="134" y2="42.7" stroke="#1b1d1e" stroke-width="0.9"/><rect x="122" y="48" width="18.5" height="12.5" rx="1" fill="#0c51c6"/><rect x="133" y="51" width="5" height="3" fill="#9cc0f0"/><line x1="124" y1="58" x2="138" y2="58" stroke="#d8e6f8" stroke-width="0.8"/><circle cx="127" cy="52.5" r="1.4" fill="#d8e6f8"/></g></svg>
<div class="a" style="left:1203px;top:756.5px;width:338px;height:1px;background:#34383a"></div>
<div class="t" id="t52" style="left:1212px;top:767.54px;font-size:12px;line-height:12px;color:#a8a095;font-weight:700;-webkit-text-stroke:0;transform:scaleX(0.9271);">Купить товар дешевле:</div>
<div class="a" style="left:1212.7px;top:787.5px;width:229px;height:40px;background:#3a3a3a;border-radius:3px 0 0 3px"></div>
<div class="t" id="t53" style="left:1222.8px;top:796.15px;font-size:14px;line-height:14px;color:#8d867c;transform:scaleX(0.9161);">Есть промо-код?</div>
<div class="a" style="left:1441.5px;top:787.5px;width:88px;height:40px;background:linear-gradient(#626262,#9a9a9a);border-radius:0 3px 3px 0"></div>
<div class="t" id="t54" style="left:1452.8px;top:796.95px;font-size:14px;line-height:14px;color:#8f857a;font-weight:700;-webkit-text-stroke:0;transform:scaleX(0.8217);">Применить</div>
<div class="a" style="left:68px;top:821px;width:1850px;height:3px;background:#1f5fb5"></div>
<div class="a" style="left:68px;top:824px;width:1850px;height:78px;background:#1c1e1f"></div>
<div class="t" id="t55" style="left:88px;top:856.15px;font-size:14px;line-height:14px;color:#c8c3bc;transform:scaleX(0.9841);">Этот сайт использует cookie (куки) для обеспечения более эффективного пользовательского опыта. Подробнее читайте в нашей</div>
<div class="t" id="t56" style="left:920.5px;top:856.15px;font-size:14px;line-height:14px;color:#4ba3e3;transform:scaleX(0.9858);">Политике использования файлов cookie</div>
<div class="t" id="t57" style="left:1179px;top:856.15px;font-size:14px;line-height:14px;color:#c8c3bc;">.</div>
<div class="a" style="left:1704px;top:844px;width:194px;height:38px;background:#1b4a8a;border-radius:3px"></div>
<div class="t" id="t58" style="left:1791.8px;top:854.66px;font-size:16px;line-height:16px;color:#e8e6e3;transform:scaleX(0.8303);">OK</div>
</body></html>
